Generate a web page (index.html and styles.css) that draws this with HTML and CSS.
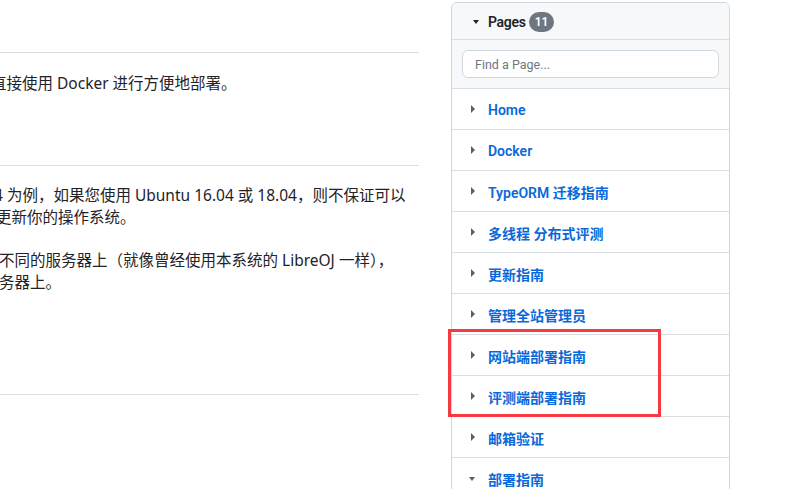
FILE: index.html
```html
<!DOCTYPE html>
<html lang="zh-CN">
<head>
<meta charset="utf-8">
<link rel="stylesheet" href="styles.css">
</head>
<body>
<div class="page">
  <main class="content">
    <div class="rule rule-1"></div>
    <div class="line l1">直接使用 Docker 进行方便地部署。</div>
    <div class="rule rule-2"></div>
    <div class="line l2">4 为例，如果您使用 Ubuntu 16.04 或 18.04，则不保证可以</div>
    <div class="line l3">更新你的操作系统。</div>
    <div class="line l4">不同的服务器上（就像曾经使用本系统的 LibreOJ 一样），</div>
    <div class="line l5">务器上。</div>
    <div class="rule rule-3"></div>
  </main>
  <aside class="sidebar">
    <div class="box">
      <div class="box-header">
        <span class="caret-down"></span>
        <span class="title">Pages</span>
        <span class="counter">11</span>
      </div>
      <div class="search">
        <div class="input">Find a Page...</div>
      </div>
      <ul class="pages">
        <li><span class="caret-right"></span><a>Home</a></li>
        <li><span class="caret-right"></span><a>Docker</a></li>
        <li><span class="caret-right"></span><a>TypeORM 迁移指南</a></li>
        <li><span class="caret-right"></span><a>多线程 分布式评测</a></li>
        <li><span class="caret-right"></span><a>更新指南</a></li>
        <li><span class="caret-right"></span><a>管理全站管理员</a></li>
        <li><span class="caret-right"></span><a>网站端部署指南</a></li>
        <li><span class="caret-right"></span><a>评测端部署指南</a></li>
        <li><span class="caret-right"></span><a>邮箱验证</a></li>
        <li><span class="caret-down small"></span><a>部署指南</a></li>
      </ul>
    </div>
    <div class="highlight"></div>
  </aside>
</div>
</body>
</html>
```

FILE: styles.css
```css
* { box-sizing: border-box; }
html, body {
  margin: 0;
  padding: 0;
  background: #ffffff;
  overflow: hidden;
}
body {
  font-family: "Roboto", "Noto Sans CJK SC", sans-serif;
  color: #1f2328;
  font-size: 14px;
}
.page {
  display: flex;
  align-items: flex-start;
  width: 793px;
  height: 489px;
  overflow: hidden;
}
.content {
  width: 419px;
  flex: none;
  overflow: hidden;
  padding-top: 52px;
}
.rule {
  height: 1px;
  background: #d8dee4;
}
.line {
  white-space: nowrap;
  line-height: 22px;
  height: 22px;
  font-size: 15.5px;
  font-family: "Noto Sans", "Noto Sans CJK SC", sans-serif;
}
.l1 { margin-top: 19px; margin-left: -9px; }
.rule-2 { margin-top: 71px; }
.l2 { margin-top: 18px; margin-left: -6px; }
.l3 { margin-left: -4px; }
.l4 { margin-top: 21px; margin-left: -1px; }
.l5 { margin-left: -1px; }
.rule-3 { margin-top: 101px; }

.sidebar {
  position: relative;
  margin-left: 32px;
  margin-top: 2px;
  width: 279px;
  flex: none;
}
.box {
  border: 1px solid #d0d7de;
  border-radius: 6px;
  overflow: hidden;
}
.box-header {
  height: 37px;
  background: #f6f8fa;
  border-bottom: 1px solid #d8dee4;
  display: flex;
  align-items: center;
  padding-left: 21px;
  padding-top: 2px;
}
.caret-down {
  width: 0;
  height: 0;
  border-left: 3px solid transparent;
  border-right: 3px solid transparent;
  border-top: 4px solid #1f2328;
  margin-right: 9px;
}
.title {
  font-weight: 600;
  font-size: 14px;
  letter-spacing: -0.3px;
  margin-right: 3px;
}
.counter {
  display: inline-flex;
  align-items: center;
  justify-content: center;
  min-width: 24px;
  height: 20px;
  padding: 0 6px;
  border-radius: 10px;
  background: #6e7781;
  color: #ffffff;
  font-size: 12px;
  font-weight: 600;
  margin-top: -1px;
}
.search {
  background: #f6f8fa;
  padding: 10px 10px;
  border-bottom: 1px solid #d8dee4;
}
.input {
  height: 28px;
  background: #ffffff;
  border: 1px solid #d0d7de;
  border-radius: 6px;
  padding-left: 12px;
  padding-top: 1px;
  display: flex;
  align-items: center;
  color: #6e7781;
  font-size: 12.5px;
}
.pages {
  list-style: none;
  margin: 0;
  padding: 0;
}
.pages li {
  height: 41px;
  border-bottom: 1px solid #d8dee4;
  display: flex;
  align-items: center;
  padding-left: 19px;
  padding-top: 1px;
}
.caret-right {
  width: 0;
  height: 0;
  border-top: 4px solid transparent;
  border-bottom: 4px solid transparent;
  border-left: 4px solid #57606a;
  margin-right: 13px;
  margin-top: -1px;
}
.caret-down.small {
  border-top-color: #57606a;
  margin-left: -2px;
  margin-right: 13px;
}
.pages a {
  color: #0969da;
  font-weight: 600;
  font-size: 14px;
}
.highlight {
  position: absolute;
  left: -3px;
  top: 327px;
  width: 213px;
  height: 88px;
  border: 3px solid #f53b3f;
}
```
